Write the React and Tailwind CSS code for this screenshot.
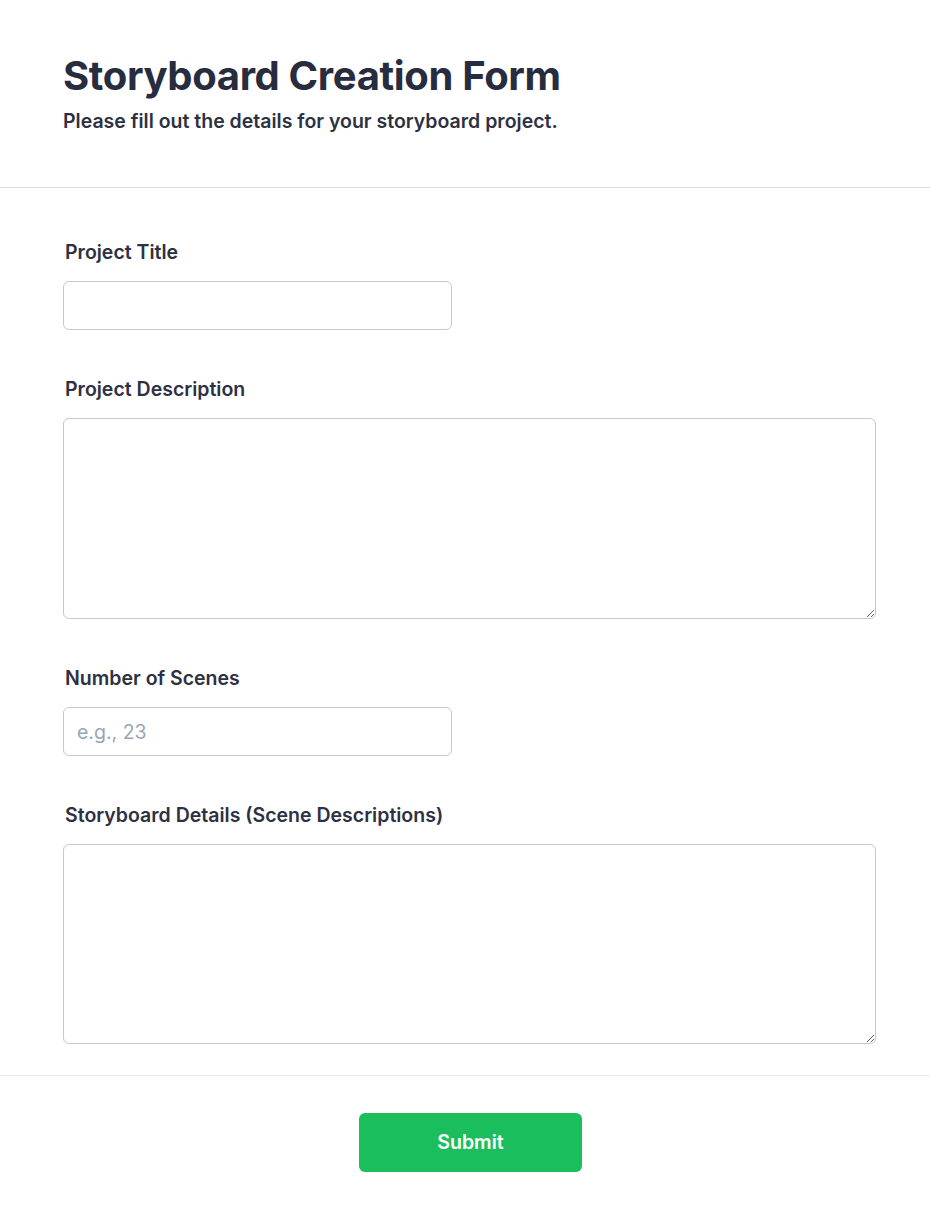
import React from "react";

const inputBase =
  "block rounded-md border border-[#c5c8d2] bg-white text-[19.5px] text-[#2d3142] outline-none placeholder:text-[#9aa6b6]";

function Field({ label, children }) {
  return (
    <div className="flex flex-col">
      <label className="ml-[2px] text-[19.5px] leading-7 font-semibold text-[#2d3142]">{label}</label>
      <div className="mt-[15px]">{children}</div>
    </div>
  );
}

export default function App() {
  return (
    <div className="min-h-[1221px] w-full bg-white font-['Inter',sans-serif] text-[#2d3142]">
      <header className="border-b border-[#d9dbe3] px-[63px] pt-[52px] pb-[52px]">
        <h1 className="text-[40px] leading-[48px] font-bold tracking-[-0.35px] text-[#272c3f]">
          Storyboard Creation Form
        </h1>
        <p className="mt-[7px] text-[19.5px] leading-7 font-semibold text-[#2d3142]">
          Please fill out the details for your storyboard project.
        </p>
      </header>

      <form className="flex flex-col gap-[45px] border-b border-[#e9eaee] px-[63px] pt-[50px] pb-[31px]">
        <Field label="Project Title">
          <input type="text" className={`${inputBase} h-[49px] w-[389px] px-3`} />
        </Field>
        <Field label="Project Description">
          <textarea className={`${inputBase} h-[201px] w-[813px] px-3 py-2`} />
        </Field>
        <Field label="Number of Scenes">
          <input type="text" placeholder="e.g., 23" className={`${inputBase} h-[49px] w-[389px] px-[13px]`} />
        </Field>
        <Field label="Storyboard Details (Scene Descriptions)">
          <textarea className={`${inputBase} h-[200px] w-[813px] px-3 py-2`} />
        </Field>
      </form>

      <div className="flex justify-center pt-[37px] pb-12 pl-[11px]">
        <button
          type="button"
          className="h-[59px] w-[223px] rounded-md bg-[#1bbe5d] text-[19.5px] font-semibold text-white"
        >
          Submit
        </button>
      </div>
    </div>
  );
}
